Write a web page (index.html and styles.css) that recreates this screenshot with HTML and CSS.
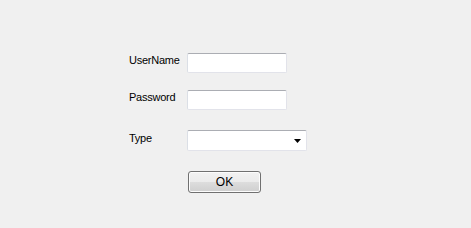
FILE: index.html
```html
<!DOCTYPE html>
<html>
<head>
<meta charset="utf-8">
<link rel="stylesheet" href="styles.css">
</head>
<body>
<form class="login">
  <div class="row row-user">
    <label class="lbl">UserName</label>
    <div class="textbox"></div>
  </div>
  <div class="row row-pass">
    <label class="lbl">Password</label>
    <div class="textbox"></div>
  </div>
  <div class="row row-type">
    <label class="lbl lbl-type">Type</label>
    <div class="combo">
      <svg class="arrow" width="7" height="4" viewBox="0 0 7 4"><path d="M0 0H7L3.5 4Z" fill="#000"/></svg>
    </div>
  </div>
  <div class="row row-btn">
    <div class="button">OK</div>
  </div>
</form>
</body>
</html>
```

FILE: styles.css
```css
html, body {
  margin: 0;
  padding: 0;
  background: #f0f0f0;
  width: 471px;
  height: 228px;
  overflow: hidden;
}
.login {
  padding: 53px 0 0 129px;
  font-family: "Liberation Sans", Arial, sans-serif;
  font-size: 11px;
  color: #000;
}
.row {
  display: flex;
  align-items: flex-start;
}
.lbl {
  width: 58px;
  line-height: 13px;
  padding-top: 1px;
  letter-spacing: -0.25px;
}
.lbl-type { padding-top: 2px; }
.row-pass { margin-top: 17px; }
.row-type { margin-top: 20px; }
.row-btn { margin-top: 20px; padding-left: 59px; }
.textbox {
  box-sizing: border-box;
  width: 100px;
  height: 20px;
  background: #fff;
  border: 1px solid #e2e3ea;
  border-top-color: #abadb3;
  border-left-color: #dbdfe6;
  border-radius: 2px;
}
.combo {
  box-sizing: border-box;
  width: 120px;
  height: 21px;
  background: #fff;
  border: 1px solid #e2e3ea;
  border-top-color: #abadb3;
  border-left-color: #dbdfe6;
  border-radius: 2px;
  display: flex;
  align-items: center;
  justify-content: flex-end;
  padding-right: 5px;
}
.arrow { display: block; margin-top: 1px; }
.button {
  box-sizing: border-box;
  width: 73px;
  height: 22px;
  border: 1px solid #707070;
  border-radius: 3px;
  background: linear-gradient(to bottom, #f2f2f2 0%, #ebebeb 50%, #dddddd 50%, #cfcfcf 100%);
  box-shadow: inset 0 0 0 1px #fcfcfc;
  display: flex;
  align-items: center;
  justify-content: center;
  font-size: 12px;
}
```
